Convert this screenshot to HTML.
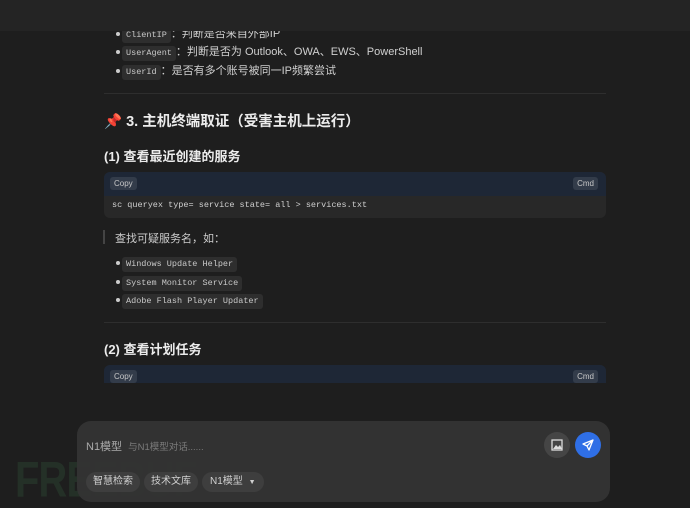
<!DOCTYPE html>
<html><head><meta charset="utf-8"><style>
*{margin:0;padding:0;box-sizing:border-box}
body{width:690px;height:508px;background:#1e1e1e;overflow:hidden;position:relative;font-family:"Liberation Sans","Noto Sans CJK SC",sans-serif;color:#d8d8d8}
.top{position:absolute;left:0;top:0;width:690px;height:31px;background:#242424}
.a{position:absolute}
.li{position:absolute;left:116px;font-size:11px;color:#d0d0d0;white-space:nowrap;line-height:16px}
.li:before{content:"";position:absolute;left:0;top:6px;width:4px;height:4px;border-radius:50%;background:#ccc}
.code{display:inline-block;background:#2e2e2e;border-radius:3px;padding:1px 4px;font-family:"Liberation Mono",monospace;font-size:8.5px;line-height:13px;color:#c8c8c8;margin-left:6px}
.hr{position:absolute;left:104px;width:502px;height:1px;background:#2e2e2e}
.cb{position:absolute;left:104px;width:502px;border-radius:6px;overflow:hidden;background:#282828}
.cbh{height:24px;background:#1e2736;position:relative}
.btn{position:absolute;top:5px;background:#333c4a;color:#c8c8c8;font-size:8px;padding:2px 4px;border-radius:3px}
.h{position:absolute;font-weight:bold;color:#ececec;white-space:nowrap}
.chip{position:absolute;top:472px;height:20px;padding:0 7px;border-radius:10px;background:#3e3e3e;font-size:10px;color:#d0d0d0;line-height:20px}
</style></head><body>
<div class="li" style="top:26px"><span class="code">ClientIP</span>：判断是否来自外部IP</div>
<div class="top"></div>
<div class="li" style="top:44px"><span class="code">UserAgent</span>：判断是否为 Outlook、OWA、EWS、PowerShell</div>
<div class="li" style="top:63px"><span class="code">UserId</span>：是否有多个账号被同一IP频繁尝试</div>
<div class="hr" style="top:93px"></div>
<div class="h" style="left:104px;top:110px;font-size:14.5px"><span style="color:#e33">📌</span> 3. 主机终端取证（受害主机上运行）</div>
<div class="h" style="left:104px;top:146px;font-size:13px">(1) 查看最近创建的服务</div>
<div class="cb" style="top:172px;height:46px"><div class="cbh"><span class="btn" style="left:6px">Copy</span><span class="btn" style="right:8px">Cmd</span></div>
<div style="font-family:'Liberation Mono',monospace;font-size:8.5px;color:#d0d0d0;padding:4px 8px">sc queryex type= service state= all &gt; services.txt</div></div>
<div class="a" style="left:103px;top:230px;width:2px;height:14px;background:#444"></div>
<div class="a" style="left:115px;top:230px;font-size:11px;color:#ccc">查找可疑服务名，如：</div>
<div class="li" style="top:255px"><span class="code">Windows Update Helper</span></div>
<div class="li" style="top:274px"><span class="code">System Monitor Service</span></div>
<div class="li" style="top:292px"><span class="code">Adobe Flash Player Updater</span></div>
<div class="hr" style="top:322px"></div>
<div class="h" style="left:104px;top:339px;font-size:13px">(2) 查看计划任务</div>
<div class="cb" style="top:365px;height:18px;border-radius:6px 6px 0 0"><div class="cbh"><span class="btn" style="left:6px">Copy</span><span class="btn" style="right:8px">Cmd</span></div></div>
<div class="a" style="left:15px;top:455px;font-size:40px;font-weight:bold;color:#243027;letter-spacing:-1px;line-height:40px;transform:scaleY(1.25);transform-origin:top left">FREEBUF</div>
<div class="a" style="left:77px;top:421px;width:533px;height:81px;background:rgba(52,52,52,0.9);border-radius:14px"></div>
<div class="a" style="left:86px;top:438px;font-size:11px;color:#aaa">N1模型 <span style="font-size:9.5px;color:#7a7a7a;margin-left:3px">与N1模型对话......</span></div>
<div class="a" style="left:544px;top:432px;width:26px;height:26px;border-radius:50%;background:#454545">
<svg width="26" height="26" viewBox="0 0 26 26"><rect x="8" y="8" width="10" height="10" fill="none" stroke="#ddd" stroke-width="1.3"/><path d="M9 17l3-4 2 2 2-2 2 4z" fill="#ddd"/></svg></div>
<div class="a" style="left:575px;top:432px;width:26px;height:26px;border-radius:50%;background:#2f6fe6">
<svg width="26" height="26" viewBox="0 0 26 26"><path d="M18 8L8 12l4 2 2 4z M12 14l6-6" fill="none" stroke="#fff" stroke-width="1.3" stroke-linejoin="round"/></svg></div>
<div class="chip" style="left:86px">智慧检索</div>
<div class="chip" style="left:144px">技术文库</div>
<div class="chip" style="left:202px;padding:0 8px">N1模型 <span style="font-size:7px;margin-left:3px">▼</span></div>
</body></html>
